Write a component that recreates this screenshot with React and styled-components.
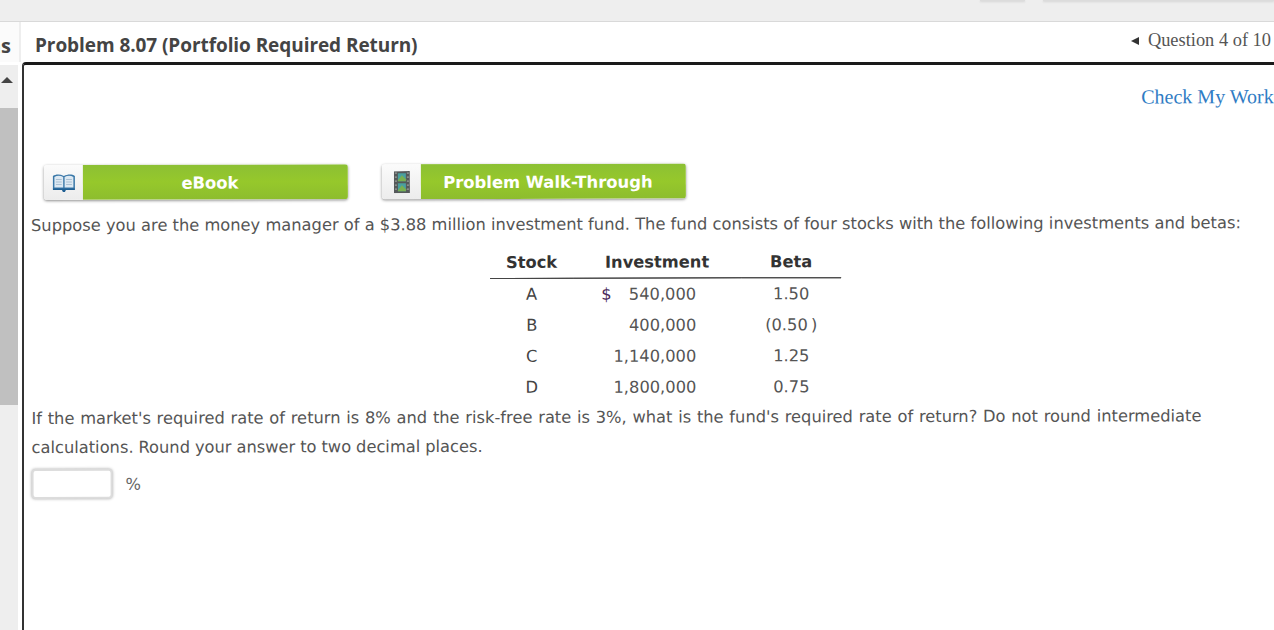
import React from "react";
import styled, { createGlobalStyle } from "styled-components";

const Global = createGlobalStyle`
  html, body { margin: 0; padding: 0; background: #fff; }
  #root { width: 1274px; height: 630px; overflow: hidden; }
`;
const Page = styled.div`
  width: 1274px; height: 630px; display: flex; flex-direction: column; overflow: hidden;
  font-family: "DejaVu Sans", Verdana, sans-serif; color: #555;
`;
const TopBar = styled.div`
  height: 21px; flex: none; background: #eeeeee; border-bottom: 1px solid #d9d9d9;
  display: flex; justify-content: flex-end; gap: 18px; align-items: flex-start;
`;
const TopTab = styled.div`
  width: ${p => p.$w}px; height: 1px; background: #dcdcdc; box-shadow: 0 1px 2px #ccc;
`;
const Header = styled.div`
  height: 40px; flex: none; display: flex; align-items: stretch; background: #fff;
`;
const Crumb = styled.div`
  width: 21px; flex: none; background: #fbfbfb; border-right: 2px solid #eeeeee; overflow: hidden; box-sizing: border-box;
  display: flex; justify-content: flex-end; align-items: center;
  font: 700 20px "Open Sans", sans-serif; color: #444;
  padding: 6px 8px 0 0;
`;
const Title = styled.h1`
  margin: 0; flex: 1; padding: 6px 0 0 14px; display: flex; align-items: center;
  font: 700 19px "Open Sans", sans-serif; color: #444; letter-spacing: -0.07px;
`;
const Progress = styled.div`
  display: flex; align-items: center; gap: 9px; padding: 0 3px 3px 0;
  font: 18.4px "Liberation Serif", serif; color: #555;
`;
const LeftTri = styled.span`
  width: 0; height: 0; border-style: solid; border-width: 4.5px 8px 4.5px 0;
  border-color: transparent #333 transparent transparent;
`;
const Main = styled.div`
  flex: 1; display: flex; min-height: 0;
`;
const Rail = styled.div`
  width: 18px; flex: none; background: #eeeeee; display: flex; flex-direction: column; margin-top: 3px;
`;
const RailArrow = styled.div`
  height: 43px; flex: none; display: flex; justify-content: center; padding: 12px 5px 0 0; box-sizing: border-box;
  &::before { content: ""; width: 0; height: 0; border-style: solid; border-width: 0 6px 6px 6px;
    border-color: transparent transparent #444 transparent; }
`;
const RailThumb = styled.div`
  height: 297px; flex: none; background: #c0c0c0;
`;
const Panel = styled.div`
  flex: 1; min-width: 0; margin-left: 4px; border-left: 2px solid #333; border-top: 3px solid #1a1a1a;
  border-top-left-radius: 4px; background: #fff; overflow: hidden;
`;
const Content = styled.div`
  transform: rotate(-0.13deg); transform-origin: 0 160px;
`;
const LinkRow = styled.div`
  display: flex; justify-content: flex-end; padding-top: 23px; height: 79px; box-sizing: border-box;
`;
const CheckLink = styled.a`
  font: 20px "Liberation Serif", serif; color: #2f7cc4; cursor: pointer;
`;
const Resources = styled.div`
  display: flex; gap: 34px; padding: 21px 0 0 20px; height: 46px;
`;
const ResourceButton = styled.div`
  width: 304px; height: 35px; display: flex; border-radius: 3px; overflow: hidden;
  box-shadow: 0 1px 3px rgba(0,0,0,.45);
`;
const IconBox = styled.div`
  width: 39px; flex: none; display: flex; align-items: center; justify-content: center;
  background: linear-gradient(#fbfbfb, #ececec);
`;
const GreenFace = styled.div`
  flex: 1; display: flex; align-items: center; justify-content: center;
  background: linear-gradient(#8cc034, #96c82b 50%, #8dbd2e);
  color: #fff; font: bold 16.4px "DejaVu Sans", sans-serif; padding: 2px 11px 0 0;
`;
const Paragraph = styled.p`
  margin: 0; padding-left: 7px; font-size: 16.3px; line-height: ${p => p.$lh || 30}px; color: #555; white-space: nowrap;
`;
const Line = styled.span`
  display: block; word-spacing: ${p => p.$ws}px;
`;
const Table = styled.table`
  border-collapse: collapse; margin: 7px 0 0 466px; width: 351px; table-layout: fixed;
  font-size: 16.3px; color: #555;
`;
const HeadCell = styled.th`
  width: ${p => p.$w}px; height: 31px; padding: 0; text-align: center; font-size: 16.3px; font-weight: bold; color: #333;
  border-bottom: 1px solid #444;
`;
const Cell = styled.td`
  height: 31px; padding: 0; text-align: center; color: ${p => p.$dark ? "#444" : "#555"};
`;
const Money = styled.div`
  width: 95px; margin-left: 28px; display: flex; justify-content: space-between;
`;
const Dollar = styled.span`color: #4a2a5a;`;
const Answer = styled.div`
  display: flex; align-items: center; gap: 13px; padding: 7px 0 0 7px;
`;
const Input = styled.input`
  width: 81px; height: 30px; box-sizing: border-box; border: 2px solid #dcdcdc; border-radius: 4px;
  background: #fff; box-shadow: 0 0 3px #aaa; outline: none;
`;
const Unit = styled.span`font-size: 16.3px; color: #666;`;

const BookIcon = () => (
  <svg width="24" height="20" viewBox="0 0 24 20">
    <path d="M1 3C4 1 8 1 12 3c4-2 8-2 11 0v13H1z" fill="#3a78a8" />
    <path d="M2.5 4C5 2.6 8.5 2.6 11.3 4v10.5H2.5zM12.7 4c2.8-1.4 6.3-1.4 8.8 0v10.5h-8.8z" fill="#dce8f2" />
    <path d="M4 6.5h5.8M4 9h5.8M4 11.5h5.8M14.2 6.5H20M14.2 9H20M14.2 11.5H20" stroke="#aac0d2" strokeWidth="1" />
    <path d="M1 15.5h22v1.5H14l-1 2h-2l-1-2H1z" fill="#1f5f93" />
  </svg>
);
const FilmIcon = () => (
  <svg width="16" height="22" viewBox="0 0 16 22">
    <rect x="0" y="0" width="16" height="22" fill="#55595a" />
    <path d="M1 2h2M1 6h2M1 10h2M1 14h2M1 18h2M13 2h2M13 6h2M13 10h2M13 14h2M13 18h2" stroke="#9aa09c" strokeWidth="1.4" />
    <rect x="4" y="2" width="8" height="8" fill="#4aa0a0" />
    <path d="M4 9l4-5 4 4v2H4z" fill="#79b050" />
    <rect x="4" y="12" width="8" height="8" fill="#4aa0a0" />
    <path d="M4 19l4-5 4 4v2H4z" fill="#79b050" />
  </svg>
);

const rows = [
  ["A", "540,000", "1.50", true],
  ["B", "400,000", "(0.50\u2009)", false],
  ["C", "1,140,000", "1.25", false],
  ["D", "1,800,000", "0.75", false],
];

export default function App() {
  return (
    <Page>
      <Global />
      <TopBar>
        <TopTab $w={45} />
        <TopTab $w={231} />
      </TopBar>
      <Header>
        <Crumb>Questions</Crumb>
        <Title>Problem 8.07 (Portfolio Required Return)</Title>
        <Progress><LeftTri />Question 4 of 10</Progress>
      </Header>
      <Main>
        <Rail>
          <RailArrow />
          <RailThumb />
        </Rail>
        <Panel>
          <Content>
            <LinkRow><CheckLink>Check My Work</CheckLink></LinkRow>
            <Resources>
              <ResourceButton>
                <IconBox><BookIcon /></IconBox>
                <GreenFace>eBook</GreenFace>
              </ResourceButton>
              <ResourceButton>
                <IconBox><FilmIcon /></IconBox>
                <GreenFace>Problem Walk-Through</GreenFace>
              </ResourceButton>
            </Resources>
            <Paragraph>Suppose you are the money manager of a $3.88 million investment fund. The fund consists of four stocks with the following investments and betas:</Paragraph>
            <Table>
              <thead>
                <tr>
                  <HeadCell $w={83}>Stock</HeadCell>
                  <HeadCell $w={168}>Investment</HeadCell>
                  <HeadCell $w={100}>Beta</HeadCell>
                </tr>
              </thead>
              <tbody>
                {rows.map(([s, inv, b, dollar]) => (
                  <tr key={s}>
                    <Cell $dark>{s}</Cell>
                    <Cell><Money><Dollar>{dollar ? "$" : ""}</Dollar><span>{inv}</span></Money></Cell>
                    <Cell>{b}</Cell>
                  </tr>
                ))}
              </tbody>
            </Table>
            <Paragraph $lh={29}>
              <Line $ws={0.55}>If the market's required rate of return is 8% and the risk-free rate is 3%, what is the fund's required rate of return? Do not round intermediate</Line>
              <Line $ws={-0.25}>calculations. Round your answer to two decimal places.</Line>
            </Paragraph>
            <Answer><Input /><Unit>%</Unit></Answer>
          </Content>
        </Panel>
      </Main>
    </Page>
  );
}
